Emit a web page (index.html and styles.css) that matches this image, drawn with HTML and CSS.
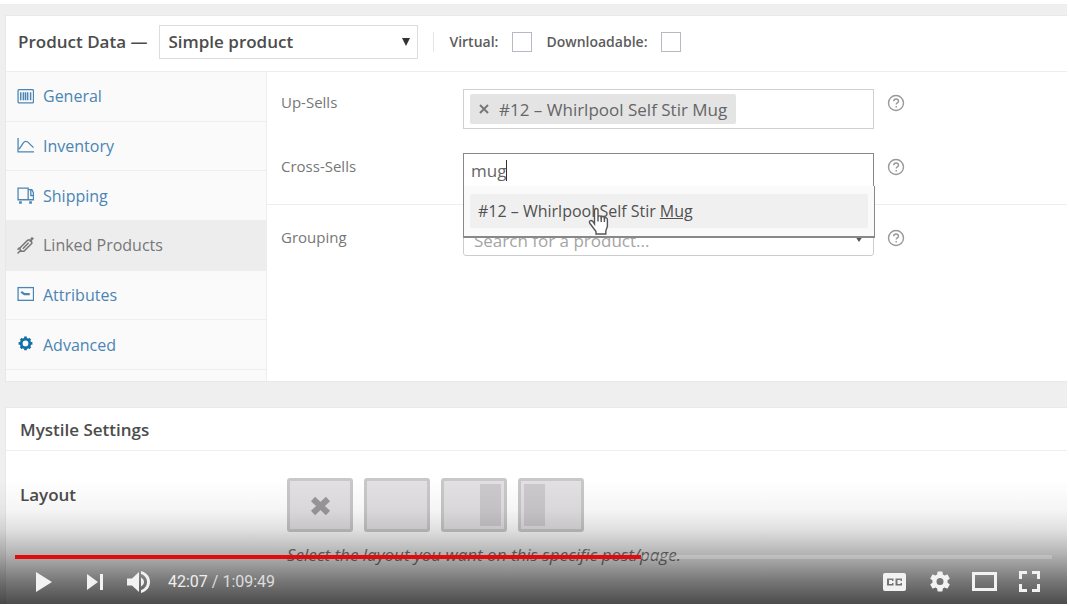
FILE: index.html
```html
<!DOCTYPE html>
<html lang="en">
<head>
	<meta charset="UTF-8">
	<title>Product Data</title>
	<link rel="stylesheet" href="styles.css">
</head>
<body>
<div class="player">
	<main class="screen">
		<section class="panel">
			<div class="panel-head">
				<label class="head-title" for="product-type">Product Data —</label>
				<div class="type-wrap">
					<select id="product-type" class="type-select">
						<option>Simple product</option>
					</select>
					<svg class="type-arrow" viewBox="0 0 8 8"><path d="M0 0h8L4 8z"/></svg>
				</div>
				<div class="head-options">
					<label for="virtual">Virtual:</label>
					<input type="checkbox" id="virtual" class="check">
					<label for="downloadable">Downloadable:</label>
					<input type="checkbox" id="downloadable" class="check">
				</div>
			</div>
			<div class="panel-body">
				<nav class="tabs">
					<ul class="tab-list">
						<li><a href="#general" class="tab">
							<svg class="tab-icon" viewBox="0 0 16 16"><rect x="1" y="1.500" width="14.500" height="12.500" rx="1"/><path d="M3.500 4v7.500M6 4v7.500M8 4v7.500M10 4v7.500M12.800 4v7.500" stroke-width="1.400"/></svg>General</a></li>
						<li><a href="#inventory" class="tab">
							<svg class="tab-icon" viewBox="0 0 16 16"><path d="M1 1v13h15M2 11.500l4-6c1.200-1.800 3.500-1.800 5 0l4.500 4.500"/></svg>Inventory</a></li>
						<li><a href="#shipping" class="tab">
							<svg class="tab-icon" viewBox="0 0 16 16"><path d="M1 1h9.500v11H1zM10.500 2.500H14l1.500 3v6.500h-5M13 2.500v5.500h2.500"/><path d="M2 14.500h2.500M11.500 14.500H14" stroke-width="2.400"/></svg>Shipping</a></li>
						<li><a href="#linked" class="tab active">
							<svg class="tab-icon" viewBox="0 0 16 16"><path d="M.5 12l2-2M.5 15.500l3.500-3.500M2.500 10.500L10 3l2.500-.5M2.500 10l1 3.500L6.500 13.500 14 6l-.5-2.500-1-1M12 4.500l3.500-3.500M13 2L14.500 .5M5.500 11l5.500-5.500" stroke-width="1.400"/></svg>Linked Products</a></li>
						<li><a href="#attributes" class="tab">
							<svg class="tab-icon" viewBox="0 0 16 16"><rect x="1" y="1.500" width="14.500" height="12"/><path d="M4 5.500l3 2.200h5" stroke-width="2"/></svg>Attributes</a></li>
						<li><a href="#advanced" class="tab">
							<svg class="tab-icon gear" viewBox="0 0 16 16"><circle cx="8" cy="7" r="4"/><path d="M8 .5v2M8 11.500v2M1.500 7h2M12.500 7h2M3.500 2.500l1.300 1.300M11.200 10.200l1.300 1.300M3.500 11.500l1.300-1.300M11.200 3.800l1.300-1.300"/></svg>Advanced</a></li>
					</ul>
				</nav>
				<form class="options">
					<div class="option-group">
						<div class="row">
							<label for="upsells">Up-Sells</label>
							<div class="tokens">
								<span class="token"><button type="button" class="token-remove" aria-label="Remove"><svg viewBox="0 0 10 10"><path d="M1 1l8 8M9 1L1 9"/></svg></button>#12 – Whirlpool Self Stir Mug</span>
								<input type="text" id="upsells" class="token-input">
							</div>
							<svg class="help" viewBox="0 0 18 18"><circle cx="9" cy="9" r="7.500"/><path d="M6.700 7.200c0-3 4.800-3 4.800 0 0 1.700-2.300 1.500-2.300 3.300M9.200 12v1.600"/></svg>
						</div>
						<div class="row">
							<label for="crosssells">Cross-Sells</label>
							<div class="search">
								<input type="text" id="crosssells" class="search-input" value="mug">
								<span class="caret"></span>
								<div class="results">
									<a href="#p12" class="result">#12 – Whirlpool Self Stir <u>Mug</u></a>
									<svg class="pointer" viewBox="0 0 22 29"><path d="M6.500 17V3.500c0-2.600 3.500-2.600 3.500 0V10c.5-1.700 3-1.500 3.200.4.800-1.300 3-1 3.200.8 1.200-1 3-.3 3 1.500V19c0 2-1.600 3.500-1.600 5.500V27H8v-2.500L2 16.500c-1.600-2.500 1-4 2.600-2.300z"/><path d="M10 10v4.500M13.200 10.500V15M16.400 11.500V15"/></svg>
								</div>
							</div>
							<svg class="help" viewBox="0 0 18 18"><circle cx="9" cy="9" r="7.500"/><path d="M6.700 7.200c0-3 4.800-3 4.800 0 0 1.700-2.300 1.500-2.300 3.300M9.200 12v1.600"/></svg>
						</div>
					</div>
					<div class="option-group">
						<div class="row">
							<label for="grouping">Grouping</label>
							<div class="group-wrap">
								<select id="grouping" class="group-select">
									<option>Search for a product...</option>
								</select>
								<svg class="group-arrow" viewBox="0 0 8 6"><path d="M0 0h8L4 6z"/></svg>
							</div>
							<svg class="help" viewBox="0 0 18 18"><circle cx="9" cy="9" r="7.500"/><path d="M6.700 7.200c0-3 4.800-3 4.800 0 0 1.700-2.300 1.500-2.300 3.300M9.200 12v1.600"/></svg>
						</div>
					</div>
				</form>
			</div>
		</section>

		<section class="panel settings">
			<h2 class="settings-head">Mystile Settings</h2>
			<div class="settings-body">
				<h3 class="settings-label">Layout</h3>
				<div class="layout-field">
					<div class="layouts">
						<label class="layout"><input type="radio" name="layout" aria-label="Default"><svg viewBox="0 0 66 54"><path class="cross" d="M26 21l15 14M41 21L26 35"/></svg></label>
						<label class="layout"><input type="radio" name="layout" aria-label="No sidebar"></label>
						<label class="layout"><input type="radio" name="layout" aria-label="Right sidebar"><svg viewBox="0 0 66 54"><path class="side" d="M39 6h21v42H39z"/></svg></label>
						<label class="layout"><input type="radio" name="layout" aria-label="Left sidebar"><svg viewBox="0 0 66 54"><path class="side" d="M6 6h21v42H6z"/></svg></label>
					</div>
					<p class="layout-help">Select the layout you want on this specific post/page.</p>
				</div>
			</div>
		</section>
	</main>

	<div class="chrome">
		<input type="range" class="progress" min="0" max="4189" value="2527" aria-label="Seek" style="--played: 60.4%">
		<div class="controls">
			<button class="ctl play" aria-label="Play"><svg width="17" height="22" viewBox="0 0 17 22"><path d="M1 1l16 10L1 21z"/></svg></button>
			<button class="ctl next" aria-label="Next"><svg width="16" height="16" viewBox="0 0 16 16"><path d="M0 0l11 8-11 8zM13 0h3v16h-3z"/></svg></button>
			<button class="ctl volume" aria-label="Mute"><svg width="24" height="22" viewBox="0 0 24 22"><path d="M0 7.500h5L12 1v20l-7-6.500H0zM14 6.500c4 2 4 7 0 9zM14 0c12 3 12 19 0 22v-3c8-2.500 8-13.500 0-16z"/></svg></button>
			<span class="time">42:07 <span class="total">/ 1:09:49</span></span>
			<span class="spacer"></span>
			<button class="ctl cc" aria-label="Subtitles"><svg width="23" height="18" viewBox="0 0 23 18"><path fill-rule="evenodd" d="M2 0h19a2 2 0 0 1 2 2v14a2 2 0 0 1-2 2H2a2 2 0 0 1-2-2V2a2 2 0 0 1 2-2zM4 5.500v7h6.500V10H9v1H6V7h3v1h1.500V5.500zM12.500 5.500v7H19V10h-1.500v1h-3V7h3v1H19V5.500z"/></svg></button>
			<button class="ctl gearbtn" aria-label="Settings"><svg width="20" height="21" viewBox="2 2 20 20"><path d="M19.430 12.980c.04-.32.070-.64.070-.98s-.03-.66-.07-.98l2.110-1.650c.19-.15.24-.42.120-.64l-2-3.460c-.12-.22-.39-.3-.61-.22l-2.490 1c-.52-.4-1.080-.73-1.690-.98l-.38-2.650A.49.49 0 0 0 14 2h-4c-.25 0-.46.180-.49.420l-.38 2.650c-.61.250-1.170.590-1.690.980l-2.490-1c-.23-.09-.49 0-.61.220l-2 3.460c-.13.220-.07.490.120.640l2.110 1.650c-.04.320-.07.650-.07.980s.030.660.070.980l-2.110 1.650c-.19.150-.24.420-.12.640l2 3.460c.120.220.390.300.610.220l2.490-1c.520.400 1.080.730 1.690.980l.38 2.650c.030.240.240.420.490.420h4c.25 0 .46-.18.490-.42l.38-2.650c.61-.25 1.170-.59 1.690-.98l2.490 1c.23.090.49 0 .61-.22l2-3.460c.12-.22.070-.49-.12-.64zM12 15.500a3.500 3.500 0 1 1 0-7 3.500 3.500 0 0 1 0 7z"/></svg></button>
			<button class="ctl theater" aria-label="Theater mode"><svg width="25" height="19" viewBox="0 0 25 19"><path fill-rule="evenodd" d="M0 0h25v19H0zM3 3v13h19V3z"/></svg></button>
			<button class="ctl full" aria-label="Full screen"><svg width="21" height="21" viewBox="0 0 21 21"><path d="M0 0h8v3H3v5H0zM13 0h8v8h-3V3h-5zM0 13h3v5h5v3H0zM18 13h3v8h-8v-3h5z"/></svg></button>
		</div>
	</div>
</div>
</body>
</html>
```
FILE: styles.css
```css
* {
	box-sizing: border-box;
}
body {
	margin: 0;
	background: #fff;
	font-family: "Open Sans", "Noto Sans", sans-serif;
	font-size: 16px;
	color: #555;
}
input, select, button {
	font: inherit;
	color: inherit;
	margin: 0;
	padding: 0;
}
ul, h2, h3, p {
	margin: 0;
	padding: 0;
}
.player {
	position: relative;
	height: calc(100vh - 6px);
	margin: 4px 2px 2px 0;
	background: #efefef;
	overflow: hidden;
}
.screen {
	padding: 11px 0 0 5px;
}
.panel {
	background: #fff;
	border: 1px solid #e8e8e8;
	border-right: none;
}

/* product data */
.panel-head {
	display: flex;
	align-items: center;
	height: 56px;
	padding: 0 0 4px 12px;
	border-bottom: 1px solid #eee;
}
.head-title {
	font-size: 17px;
	font-weight: 600;
	color: #4c4c4c;
	margin-right: 12px;
}
.type-wrap, .group-wrap {
	position: relative;
}
.type-select {
	appearance: none;
	display: block;
	width: 259px;
	height: 34px;
	padding-left: 8px;
	font-size: 17px;
	font-weight: 600;
	color: #4c4c4c;
	background: #fff;
	border: 1px solid #ddd;
	border-radius: 0;
}
.type-arrow {
	position: absolute;
	right: 8px;
	top: 13px;
	width: 8px;
	height: 8px;
	fill: #333;
}
.head-options {
	display: flex;
	align-items: center;
	height: 20px;
	margin-left: 15px;
	padding-left: 15px;
	border-left: 1px solid #e5e5e5;
	font-size: 14px;
	font-weight: 600;
	color: #5c5c5c;
}
.check {
	appearance: none;
	width: 20px;
	height: 20px;
	margin: 0 14px;
	background: #fff;
	border: 1px solid #b9b9c4;
}
.panel-body {
	display: flex;
	height: 309px;
}
.tabs {
	flex: 0 0 261px;
	background: #fafafa;
	border-right: 1px solid #eee;
}
.tab-list {
	display: grid;
	grid-auto-rows: 1fr;
	height: 298px;
	list-style: none;
}
.tab {
	display: flex;
	align-items: center;
	height: 100%;
	padding-left: 11px;
	border-bottom: 1px solid #eee;
	color: #4a85b4;
	text-decoration: none;
}
.tab.active {
	background: #ededee;
	color: #777;
}
.tab-icon {
	width: 17px;
	height: 17px;
	margin-right: 9px;
	fill: none;
	stroke: currentColor;
	stroke-width: 1.2;
}
.gear {
	color: #1471a5;
	stroke-width: 2.6;
}

/* linked products form */
.options {
	flex: 1;
	font-size: 15px;
	color: #777;
}
.option-group {
	display: grid;
	gap: 24px;
	padding: 17px 0 18px 14px;
}
.option-group + .option-group {
	padding-top: 19px;
	border-top: 1px solid #eee;
}
.row {
	display: grid;
	grid-template-columns: 182px minmax(0, 411px) 18px;
	align-items: start;
}
.row label {
	padding-top: 3px;
}
.tokens {
	display: flex;
	height: 40px;
	padding: 4px 6px;
	border: 1px solid #d0d0d0;
	font-size: 17px;
	color: #666;
}
.token {
	display: flex;
	align-items: center;
	flex: none;
	padding: 0 9px;
	background: #e4e4e4;
	border-radius: 2px;
}
.token-remove {
	display: flex;
	margin-right: 10px;
	background: none;
	border: none;
}
.token-remove svg {
	width: 10px;
	height: 10px;
	stroke: #777;
	stroke-width: 2;
}
.token-input {
	flex: 1;
	min-width: 0;
	border: none;
	outline: none;
}
.search {
	position: relative;
	height: 33px;
}
.search-input {
	width: 100%;
	height: 33px;
	padding-left: 7px;
	font-size: 17px;
	color: #666;
	background: #fff;
	border: 1px solid #888;
	border-bottom: none;
	outline: none;
}
.caret {
	position: absolute;
	left: 43px;
	top: 7px;
	width: 1px;
	height: 21px;
	background: #333;
}
.results {
	position: absolute;
	z-index: 1;
	top: 33px;
	left: 0;
	right: -1px;
	height: 52px;
	padding: 8px 6px;
	background: #fafafa;
	border: 1px solid #888;
	border-top: none;
	border-bottom-width: 2px;
}
.result {
	display: flex;
	align-items: center;
	gap: 4px;
	height: 34px;
	padding-left: 8px;
	background: #f0f0f0;
	border-radius: 2px;
	font-size: 16px;
	color: #505050;
	text-decoration: none;
}
.pointer {
	position: absolute;
	left: 124px;
	top: 21px;
	width: 22px;
	height: 29px;
	fill: #fff;
	stroke: #555;
	stroke-width: 1.4;
}
.help {
	width: 18px;
	height: 18px;
	margin: 5px 0 0 13px;
	fill: none;
	stroke: #999;
	stroke-width: 1.4;
}
.group-select {
	appearance: none;
	display: block;
	width: 100%;
	height: 32px;
	padding-left: 10px;
	font-size: 17px;
	color: #a5a5a5;
	background: #fff;
	border: 1px solid #ccc;
	border-radius: 3px;
}
.group-arrow {
	position: absolute;
	right: 11px;
	top: 12px;
	width: 8px;
	height: 6px;
	fill: #555;
}

/* mystile settings */
.settings {
	margin-top: 25px;
	min-height: 220px;
}
.settings-head {
	height: 43px;
	padding-left: 14px;
	border-bottom: 1px solid #eee;
	font-size: 17px;
	font-weight: 600;
	line-height: 43px;
	color: #4c4c4c;
}
.settings-body {
	display: grid;
	grid-template-columns: 267px 1fr;
	padding: 27px 0 0 14px;
}
.settings-label {
	font-size: 17px;
	font-weight: 600;
	line-height: 34px;
	color: #4c4c4c;
}
.layouts {
	display: flex;
	gap: 11px;
}
.layout {
	position: relative;
	width: 66px;
	height: 54px;
}
.layout input {
	appearance: none;
	display: block;
	width: 66px;
	height: 54px;
	background: #e2e0e3;
	border: 3px solid #c8c8c8;
	border-radius: 3px;
}
.layout svg {
	position: absolute;
	left: 0;
	top: 0;
	width: 66px;
	height: 54px;
}
.cross {
	stroke: #999;
	stroke-width: 6;
}
.side {
	fill: #cbc9cc;
}
.layout-help {
	padding-top: 12px;
	font-size: 17px;
	font-style: italic;
	line-height: 22px;
	color: #777;
}

/* video controls */
.chrome {
	position: absolute;
	left: 0;
	right: 0;
	bottom: 0;
	height: 124px;
	padding: 75px 15px 0;
	background: linear-gradient(rgba(0,0,0,0), rgba(0,0,0,.04) 24%, rgba(0,0,0,.12) 40%, rgba(0,0,0,.3) 60%, rgba(0,0,0,.53) 81%, rgba(0,0,0,.7));
}
.progress {
	appearance: none;
	display: block;
	width: 100%;
	height: 4px;
	background: linear-gradient(to right, #e30b0b var(--played), rgba(255,255,255,.2) var(--played));
}
.progress::-webkit-slider-thumb {
	appearance: none;
	width: 0;
	height: 0;
}
.controls {
	display: flex;
	align-items: center;
	height: 45px;
	padding: 0 12px 0 20px;
}
.ctl {
	display: flex;
	background: none;
	border: none;
}
.ctl svg {
	fill: #f2f2f2;
}
.next {
	margin-left: 35px;
}
.volume {
	margin-left: 24px;
}
.time {
	margin-left: 17px;
	font-family: Roboto, sans-serif;
	font-size: 16px;
	color: #eee;
}
.total {
	color: #ddd;
}
.spacer {
	flex: 1;
}
.gearbtn {
	margin-left: 24px;
}
.theater {
	margin-left: 22px;
}
.full {
	margin-left: 22px;
}
```
